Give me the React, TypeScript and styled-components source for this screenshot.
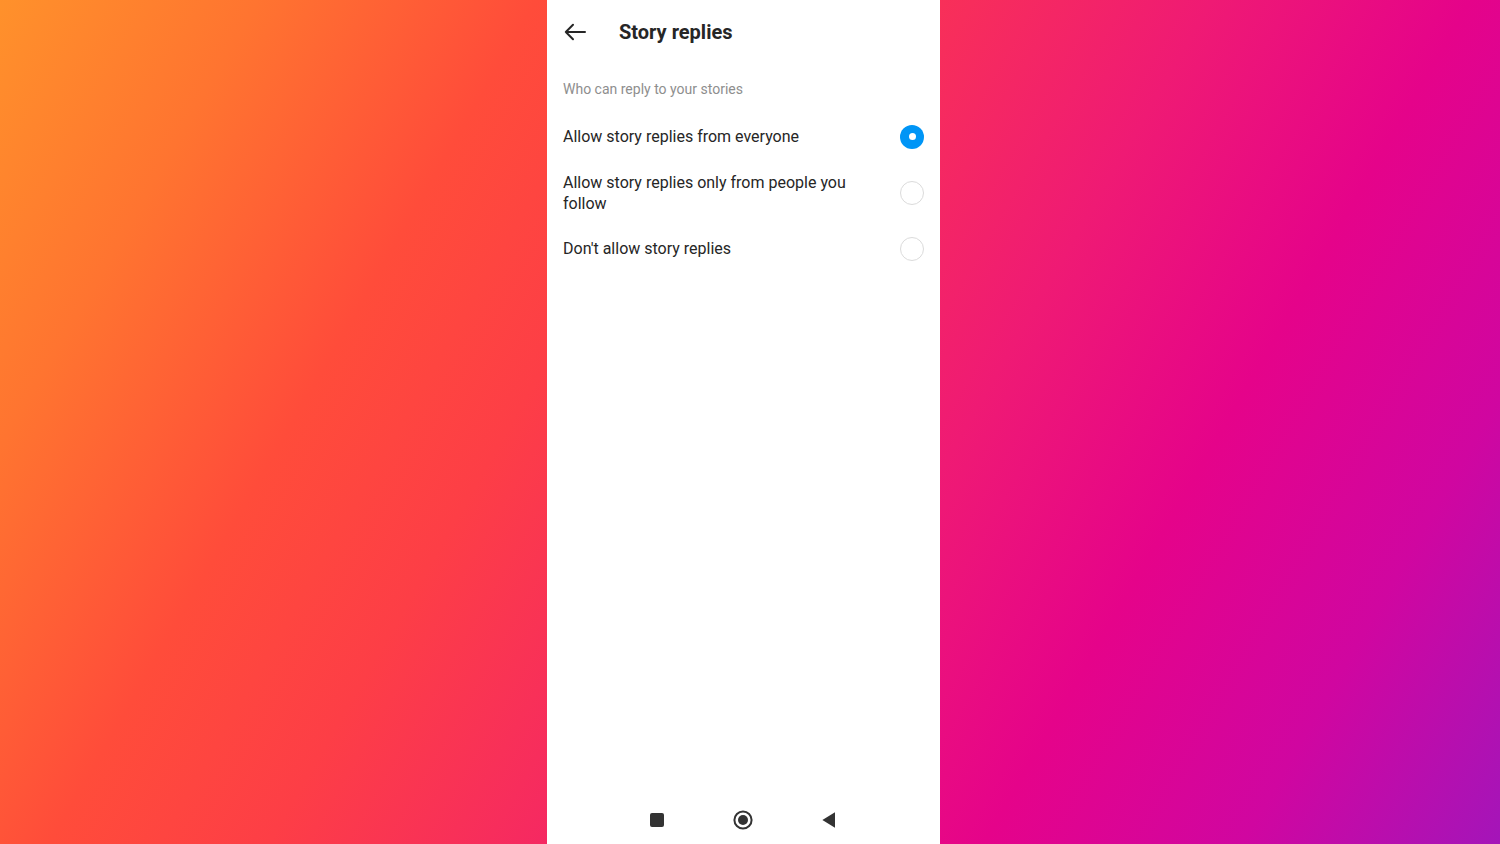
import React, { useState } from "react";
import styled, { createGlobalStyle } from "styled-components";

const GlobalStyle = createGlobalStyle`
  html, body {
    margin: 0;
    padding: 0;
    height: 100%;
  }
  body {
    font-family: Roboto, "Noto Sans", "Liberation Sans", sans-serif;
    -webkit-font-smoothing: antialiased;
  }
  #root {
    height: 100%;
  }
`;

const Backdrop = styled.div`
  width: 100%;
  height: 100vh;
  display: flex;
  justify-content: center;
  background: linear-gradient(
    120deg,
    #ff912b 0%,
    #ff7430 13%,
    #ff4c3a 27%,
    #fd3e46 38%,
    #f72d5c 49%,
    #ef1a74 61%,
    #e5038a 74%,
    #d006a0 87%,
    #a415b9 100%
  );
  overflow: hidden;
`;

const Phone = styled.div`
  width: 393px;
  height: 100%;
  margin-left: -13px;
  background: #ffffff;
  display: flex;
  flex-direction: column;
`;

const Header = styled.header`
  height: 64px;
  display: flex;
  align-items: center;
  padding: 0 16px;
  gap: 32px;
  flex-shrink: 0;
`;

const BackButton = styled.button`
  border: 0;
  background: none;
  padding: 0;
  width: 24px;
  height: 24px;
  display: flex;
  align-items: center;
  justify-content: center;
  color: #262626;
  cursor: pointer;
`;

const Title = styled.h1`
  margin: 0;
  font-size: 20px;
  font-weight: 700;
  color: #262626;
`;

const SectionLabel = styled.div`
  margin-top: 16px;
  padding: 0 16px;
  font-size: 14px;
  line-height: 18px;
  color: #8e8e8e;
`;

const OptionList = styled.div`
  margin-top: 15px;
  display: flex;
  flex-direction: column;
`;

const OptionRow = styled.label`
  display: flex;
  align-items: center;
  gap: 20px;
  padding: 11.5px 16px;
  cursor: pointer;
`;

const OptionText = styled.span`
  flex: 1;
  font-size: 16px;
  line-height: 21px;
  color: #262626;
`;

const Radio = styled.span<{ $checked: boolean }>`
  width: 24px;
  height: 24px;
  border-radius: 50%;
  box-sizing: border-box;
  flex-shrink: 0;
  display: flex;
  align-items: center;
  justify-content: center;
  background: ${(p) => (p.$checked ? "#0095f6" : "#ffffff")};
  border: ${(p) => (p.$checked ? "none" : "1.5px solid #dbdbdb")};

  &::after {
    content: "";
    display: ${(p) => (p.$checked ? "block" : "none")};
    width: 7px;
    height: 7px;
    border-radius: 50%;
    background: #ffffff;
  }
`;

const Spacer = styled.div`
  flex: 1;
`;

const NavBar = styled.nav`
  height: 48px;
  display: flex;
  align-items: center;
  justify-content: center;
  gap: 66px;
  padding-right: 1px;
  flex-shrink: 0;
`;

const NavKey = styled.span`
  width: 20px;
  height: 20px;
  display: flex;
  align-items: center;
  justify-content: center;
`;

const RecentsKey = styled.span`
  width: 14px;
  height: 14px;
  border-radius: 2px;
  background: #333333;
`;

const options = [
  "Allow story replies from everyone",
  "Allow story replies only from people you follow",
  "Don't allow story replies",
];

export default function App() {
  const [selected, setSelected] = useState(0);

  return (
    <>
      <GlobalStyle />
      <Backdrop>
        <Phone>
          <Header>
            <BackButton aria-label="Back">
              <svg width="24" height="24" viewBox="0 0 24 24" fill="none">
                <path
                  d="M22 12H2.8M10 4.8L2.8 12l7.2 7.2"
                  stroke="currentColor"
                  strokeWidth="2"
                  strokeLinecap="round"
                  strokeLinejoin="round"
                />
              </svg>
            </BackButton>
            <Title>Story replies</Title>
          </Header>

          <SectionLabel>Who can reply to your stories</SectionLabel>

          <OptionList>
            {options.map((text, i) => (
              <OptionRow key={text} onClick={() => setSelected(i)}>
                <OptionText>{text}</OptionText>
                <Radio $checked={selected === i} />
              </OptionRow>
            ))}
          </OptionList>

          <Spacer />

          <NavBar>
            <NavKey>
              <RecentsKey />
            </NavKey>
            <NavKey>
              <svg width="20" height="20" viewBox="0 0 20 20">
                <circle cx="10" cy="10" r="8.6" fill="none" stroke="#333" strokeWidth="2" />
                <circle cx="10" cy="10" r="5" fill="#333" />
              </svg>
            </NavKey>
            <NavKey>
              <svg width="20" height="20" viewBox="0 0 20 20">
                <path d="M16 2.2V17.8L3.4 10Z" fill="#333" />
              </svg>
            </NavKey>
          </NavBar>
        </Phone>
      </Backdrop>
    </>
  );
}
